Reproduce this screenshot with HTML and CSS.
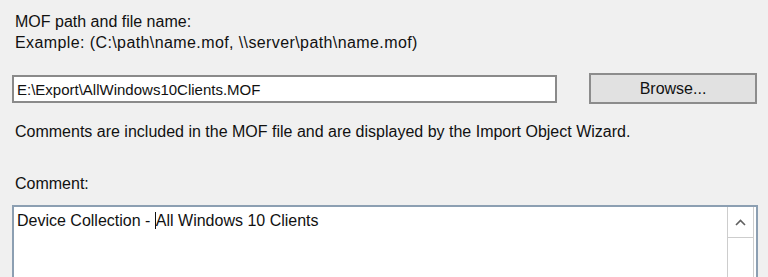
FILE: index.html
```html
<!DOCTYPE html>
<html lang="en">
<head>
    <meta charset="UTF-8">
    <title>Export Objects - File</title>
    <link rel="stylesheet" href="styles.css">
</head>
<body>
    <div class="dialog">
        <!-- path hint -->
        <div class="hint">
            <div>MOF path and file name:</div>
            <div class="example">Example: (C:\path\name.mof, \\server\path\name.mof)</div>
        </div>

        <!-- path + browse -->
        <div class="path-row">
            <div class="text-input">E:\Export\AllWindows10Clients.MOF</div>
            <button class="win-button">Browse...</button>
        </div>

        <div class="note">Comments are included in the MOF file and are displayed by the Import Object Wizard.</div>

        <div class="comment-label">Comment:</div>
        <div class="comment-box">
            <div class="comment-text">Device Collection - <span class="caret"></span>All Windows 10 Clients</div>
            <div class="scrollbar">
                <div class="scroll-up">
                    <svg width="11" height="7" viewBox="0 0 11 7"><path d="M1 6 L5.5 1.5 L10 6" fill="none" stroke="#606060" stroke-width="1.6"/></svg>
                </div>
            </div>
        </div>
    </div>
</body>
</html>
```

FILE: styles.css
```css
* {
    margin: 0;
    padding: 0;
    box-sizing: border-box;
}

body {
    font-family: "Liberation Sans", Arial, sans-serif;
    font-size: 16px;
    color: #111111;
    background-color: #f0f0f0;
    width: 768px;
    height: 277px;
    overflow: hidden;
}

.dialog {
    padding: 11px 11px 0 12px;
    display: flex;
    flex-direction: column;
}

.hint {
    padding-left: 3px;
    line-height: 21px;
}

.hint .example {
    letter-spacing: 0.4px;
}

/* path row */
.path-row {
    display: flex;
    align-items: center;
    margin-top: 20px;
}

.text-input {
    width: 545px;
    height: 28px;
    background-color: white;
    border: 2px solid #8a8a8a;
    padding: 3px 0 0 3px;
    font-size: 15px;
    line-height: 20px;
}

.win-button {
    width: 168px;
    height: 31px;
    margin-left: 32px;
    background-color: #e1e1e1;
    border: 2px solid #8c8c8c;
    font-family: inherit;
    font-size: 16px;
    color: #111111;
}

.note {
    padding-left: 3px;
    margin-top: 17px;
    line-height: 21px;
}

.comment-label {
    padding-left: 3px;
    margin-top: 31px;
    line-height: 21px;
}

/* comment area */
.comment-box {
    margin-top: 11px;
    height: 80px;
    width: 746px;
    background-color: white;
    border: 2px solid #8c9fb2;
    border-bottom: none;
    display: flex;
    justify-content: space-between;
}

.comment-text {
    padding: 3px 0 0 3px;
    line-height: 21px;
}

.caret {
    display: inline-block;
    width: 1px;
    height: 17px;
    background-color: #111111;
    vertical-align: -3px;
}

.scrollbar {
    width: 27px;
    margin-right: 2px;
    border-left: 1px solid #cdcdcd;
    border-right: 1px solid #cdcdcd;
}

.scroll-up {
    height: 31px;
    border-bottom: 1px solid #cdcdcd;
    display: flex;
    align-items: center;
    justify-content: center;
}
```
